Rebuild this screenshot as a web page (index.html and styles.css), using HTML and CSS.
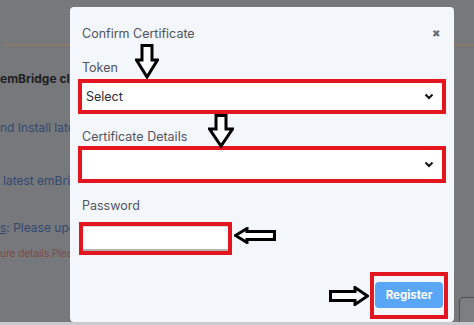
FILE: index.html
```html
<!DOCTYPE html>
<html>
<head>
<meta charset="utf-8">
<link rel="stylesheet" href="styles.css">
</head>
<body>
<div class="backdrop">
  <div class="rule"></div>
  <p class="bk bold">emBridge click</p>
  <p class="bk link">nd Install late</p>
  <p class="bk link indent">latest emBri</p>
  <p class="bk link"><u>s</u>: Please upd</p>
  <p class="bk err">ure details.Plea</p>
  <div class="bk-corner"></div>
  <div class="bk-strip"></div>
</div>

<div class="modal">
  <div class="modal-head">
    <span class="title">Confirm Certificate</span>
    <span class="close">&#x2716;</span>
  </div>
  <div class="modal-body">
    <label class="lbl">Token</label>
    <div class="select mark">
      <span>Select</span>
      <svg class="chev" width="10" height="7" viewBox="0 0 10 7"><path d="M1.5 1.5 L5 5 L8.5 1.5" fill="none" stroke="#111" stroke-width="2"/></svg>
    </div>
    <label class="lbl second">Certificate Details</label>
    <div class="select mark tall">
      <span></span>
      <svg class="chev" width="10" height="7" viewBox="0 0 10 7"><path d="M1.5 1.5 L5 5 L8.5 1.5" fill="none" stroke="#111" stroke-width="2"/></svg>
    </div>
    <label class="lbl third">Password</label>
    <div class="pw-mark"><div class="pw-input"></div></div>
  </div>
  <div class="modal-foot">
    <div class="btn-mark"><button class="btn">Register</button></div>
  </div>
</div>

<svg class="arrow a1" width="24" height="35" viewBox="0 0 24 35"><polygon points="7,1.5 17,1.5 17,16 22.5,16 12,33 1.5,16 7,16" fill="#fff" stroke="#000" stroke-width="3" stroke-linejoin="miter"/></svg>
<svg class="arrow a2" width="26" height="34" viewBox="0 0 26 34"><polygon points="8,1.5 18,1.5 18,15 24.5,15 13,32 1.5,15 8,15" fill="#fff" stroke="#000" stroke-width="3"/></svg>
<svg class="arrow a3" width="42" height="17" viewBox="0 0 42 17"><polygon points="1.5,8.5 13,1.5 13,4.5 40.5,4.5 40.5,12.5 13,12.5 13,15.5" fill="#fff" stroke="#000" stroke-width="3"/></svg>
<svg class="arrow a4" width="40" height="20" viewBox="0 0 40 20"><polygon points="38.5,10 26,1.5 26,5.5 1.5,5.5 1.5,14.5 26,14.5 26,18.5" fill="#fff" stroke="#000" stroke-width="3"/></svg>
</body>
</html>
```

FILE: styles.css
```css
* { box-sizing: border-box; }
html, body { margin: 0; padding: 0; }
body {
  width: 474px;
  height: 325px;
  overflow: hidden;
  background: #76787c;
  font-family: Inter, "Noto Sans", sans-serif;
  position: relative;
}
.backdrop {
  height: 325px;
  display: flex;
  flex-direction: column;
  padding-top: 44px;
  position: relative;
}
.rule {
  height: 2px;
  background: #8a7866;
  margin-left: 3px;
}
.bk {
  margin: 0;
  width: 70px;
  overflow: hidden;
  white-space: nowrap;
  font-size: 12px;
  line-height: 16px;
}
.bold { font-weight: 700; color: #1e2023; margin-top: 25px; }
.link { color: #34496f; }
.bold + .link { margin-top: 34px; }
.link.indent { margin-top: 38px; padding-left: 3px; }
.link.indent + .link { margin-top: 32px; }
.err { color: #7e4a46; font-size: 10px; margin-top: 10px; }
.bk-corner {
  margin-top: 36px;
  margin-left: 459px;
  width: 30px;
  height: 30px;
  border: 1.5px solid #4e5053;
  border-radius: 4px;
  background: #7c7e82;
}
.bk-strip {
  position: absolute;
  left: 0; right: 0; bottom: 0;
  height: 3px;
  background: #c9cacc;
}
.modal {
  position: absolute;
  left: 70px;
  top: 7px;
  width: 384px;
  height: 315px;
  background: #f3f6fb;
  border-radius: 4px;
  display: flex;
  flex-direction: column;
}
.modal-head {
  display: flex;
  justify-content: space-between;
  align-items: center;
  padding: 12px 14px 0 12px;
  height: 40px;
}
.title { font-size: 12.5px; color: #50545a; }
.close { font-size: 10px; color: #6b6e73; }
.modal-body {
  display: flex;
  flex-direction: column;
  padding: 0 12px;
}
.lbl {
  font-size: 12.5px;
  line-height: 16px;
  color: #50545a;
  margin-top: 13px;
}
.lbl.second { margin-top: 19px; }
.lbl.third { margin-top: 19px; }
.select {
  display: flex;
  justify-content: space-between;
  align-items: center;
  height: 27px;
  background: #fff;
  padding: 0 8px 0 4px;
  font-size: 12.5px;
  color: #2b2d31;
  margin-top: 7px;
}
.select.tall { height: 29px; margin-top: 5px; }
.mark { outline: 4px solid #e3161f; }
.chev { display: block; }
.pw-mark {
  width: 153px;
  margin-left: -3px;
  margin-top: 8px;
  border: 4px solid #e3161f;
  background: #fff;
}
.pw-input {
  height: 25px;
  background: #fff;
  border-top: 1px solid #d8d8d8;
  border-bottom: 2px solid #b3b3b3;
}
.modal-foot {
  margin-top: auto;
  display: flex;
  justify-content: flex-end;
  padding: 0 6px 3px 0;
}
.btn-mark {
  border: 4px solid #e3161f;
  padding: 6px 1px 7px 1px;
  width: 78px;
}
.btn {
  display: block;
  width: 100%;
  height: 26px;
  border: 0;
  border-radius: 4px;
  background: #5aa6f6;
  color: #fff;
  font-family: Inter, "Noto Sans", sans-serif;
  font-weight: 700;
  font-size: 11.5px;
  padding: 0;
}
.arrow { position: absolute; display: block; }
.a1 { left: 135px; top: 44px; }
.a2 { left: 208px; top: 114px; }
.a3 { left: 234px; top: 227px; }
.a4 { left: 329px; top: 286px; }
```
